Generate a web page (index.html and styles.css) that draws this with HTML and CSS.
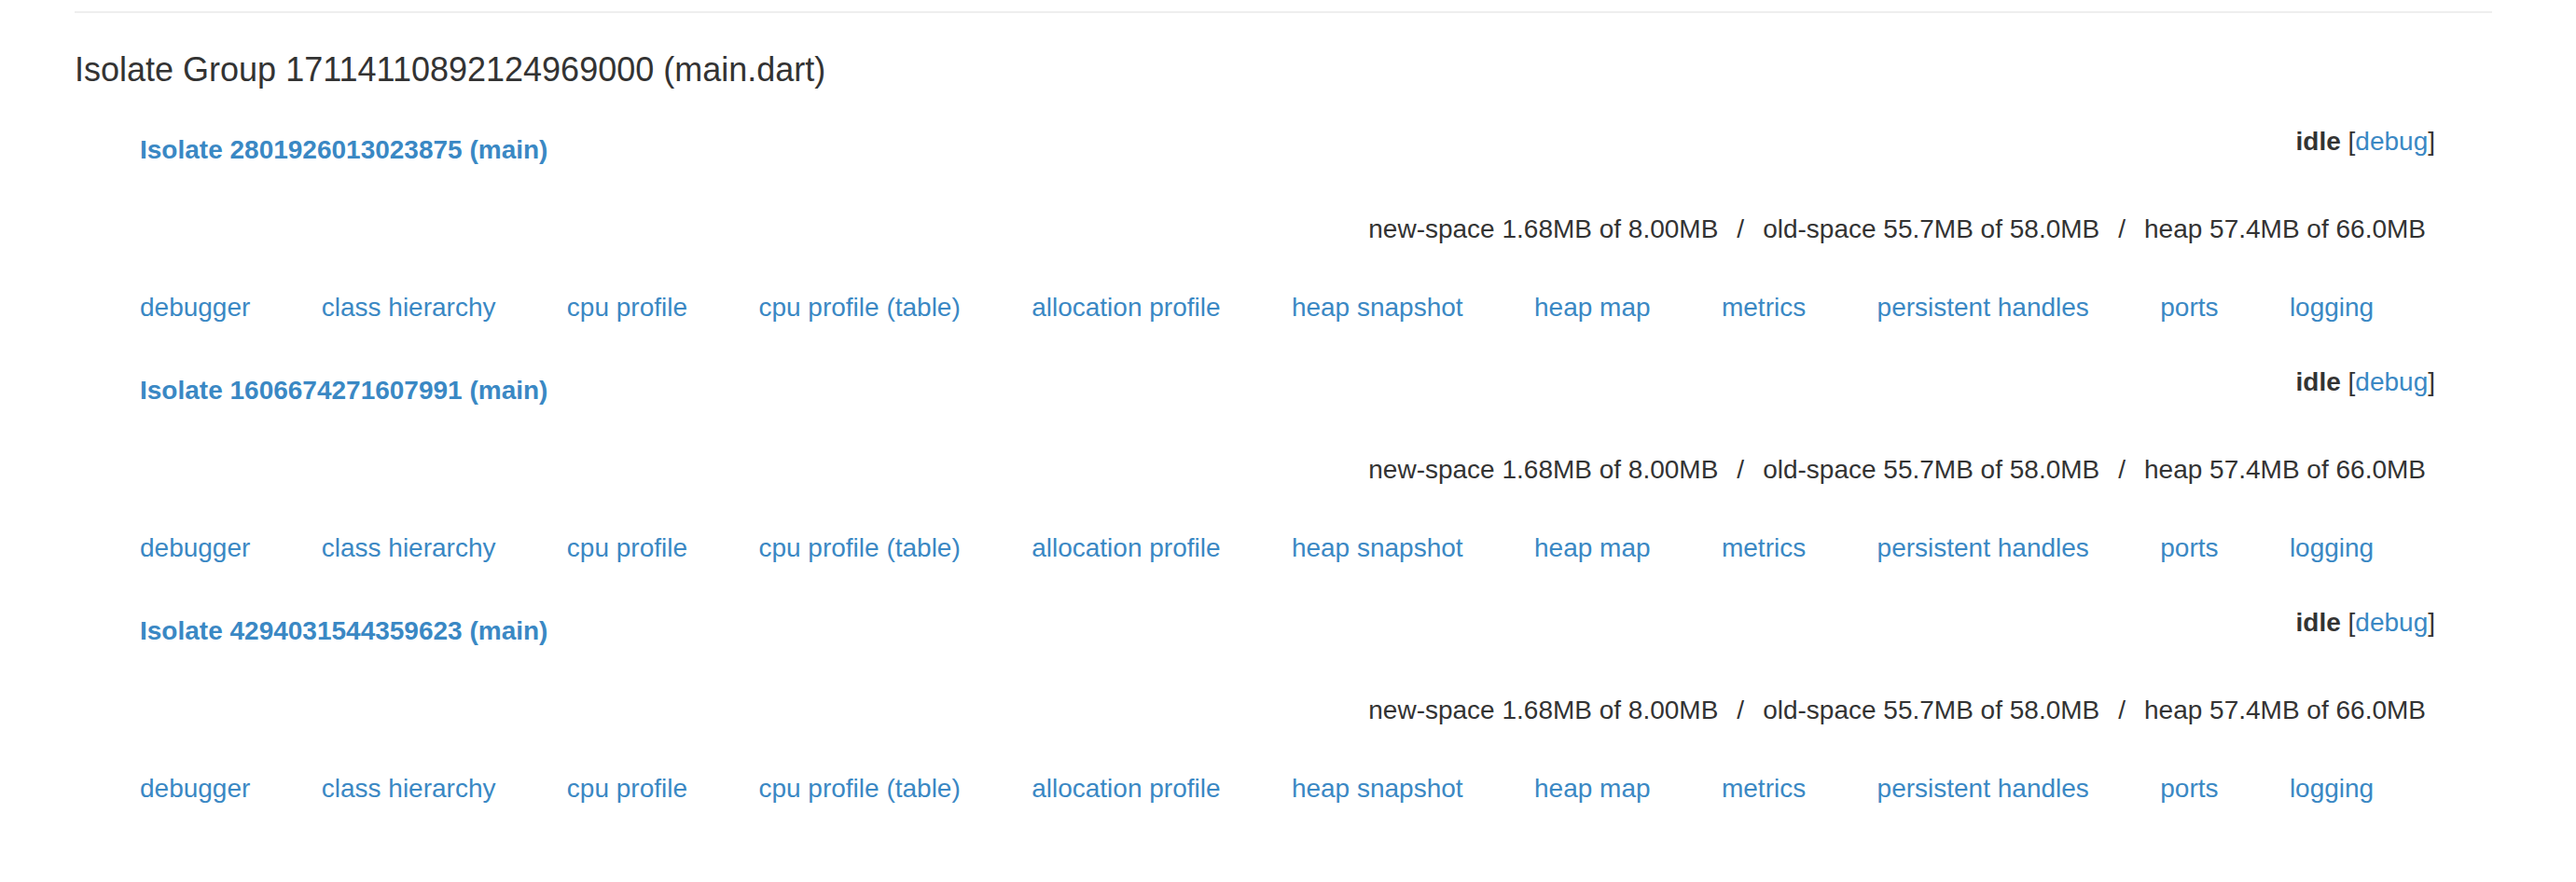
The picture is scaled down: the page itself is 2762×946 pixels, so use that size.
FILE: index.html
```html
<!DOCTYPE html>
<html lang="en">
<head>
<meta charset="utf-8">
<title>Isolate Group</title>
<link rel="stylesheet" href="styles.css">
</head>
<body>
<div class="page">
  <hr class="rule">
  <h2 class="group-title">Isolate Group 17114110892124969000 (main.dart)</h2>
  <ul class="isolates">
    <li class="isolate">
      <div class="head">
        <a class="isolate-ref" href="#">Isolate 2801926013023875 (main)</a>
        <div class="state"><strong>idle</strong> [<a href="#">debug</a>]</div>
      </div>
      <div class="memory">new-space 1.68MB of 8.00MB<span class="sep">/</span>old-space 55.7MB of 58.0MB<span class="sep">/</span>heap 57.4MB of 66.0MB</div>
      <nav class="actions">
        <a href="#">debugger</a><a href="#">class hierarchy</a><a href="#">cpu profile</a><a href="#">cpu profile (table)</a><a href="#">allocation profile</a><a href="#">heap snapshot</a><a href="#">heap map</a><a href="#">metrics</a><a href="#">persistent handles</a><a href="#">ports</a><a href="#">logging</a>
      </nav>
    </li>
    <li class="isolate">
      <div class="head">
        <a class="isolate-ref" href="#">Isolate 1606674271607991 (main)</a>
        <div class="state"><strong>idle</strong> [<a href="#">debug</a>]</div>
      </div>
      <div class="memory">new-space 1.68MB of 8.00MB<span class="sep">/</span>old-space 55.7MB of 58.0MB<span class="sep">/</span>heap 57.4MB of 66.0MB</div>
      <nav class="actions">
        <a href="#">debugger</a><a href="#">class hierarchy</a><a href="#">cpu profile</a><a href="#">cpu profile (table)</a><a href="#">allocation profile</a><a href="#">heap snapshot</a><a href="#">heap map</a><a href="#">metrics</a><a href="#">persistent handles</a><a href="#">ports</a><a href="#">logging</a>
      </nav>
    </li>
    <li class="isolate">
      <div class="head">
        <a class="isolate-ref" href="#">Isolate 4294031544359623 (main)</a>
        <div class="state"><strong>idle</strong> [<a href="#">debug</a>]</div>
      </div>
      <div class="memory">new-space 1.68MB of 8.00MB<span class="sep">/</span>old-space 55.7MB of 58.0MB<span class="sep">/</span>heap 57.4MB of 66.0MB</div>
      <nav class="actions">
        <a href="#">debugger</a><a href="#">class hierarchy</a><a href="#">cpu profile</a><a href="#">cpu profile (table)</a><a href="#">allocation profile</a><a href="#">heap snapshot</a><a href="#">heap map</a><a href="#">metrics</a><a href="#">persistent handles</a><a href="#">ports</a><a href="#">logging</a>
      </nav>
    </li>
  </ul>
</div>
</body>
</html>
```

FILE: styles.css
```css
html, body {
  margin: 0;
  padding: 0;
  background: #ffffff;
}

body {
  font-family: "Liberation Sans", Arial, Helvetica, sans-serif;
  font-size: 28px;
  line-height: 40px;
  color: #333333;
}

a {
  color: #3a88c4;
  text-decoration: none;
}

.page {
  padding: 12px 90px 0 80px;
}

.rule {
  height: 2px;
  margin: 0;
  border: 0;
  background: #eeeeee;
}

.group-title {
  margin: 41px 0 37px;
  font-size: 36px;
  line-height: 40px;
  font-weight: 400;
  color: #333333;
}

.isolates {
  list-style: none;
  margin: 0;
  padding: 0;
}

.isolate {
  padding: 0 61px 0 70px;
}

.isolate + .isolate {
  margin-top: 40px;
}

.head {
  display: flex;
  justify-content: space-between;
  align-items: flex-start;
}

.isolate-ref {
  margin-top: 9px;
  font-weight: 700;
}

.state strong {
  font-weight: 700;
  color: #333333;
}

.memory {
  margin-top: 45px;
  padding-right: 10px;
  text-align: right;
  white-space: nowrap;
}

.sep {
  margin: 0 20px;
}

.actions {
  display: flex;
  gap: 76.4px;
  margin-top: 44px;
  white-space: nowrap;
}
```
